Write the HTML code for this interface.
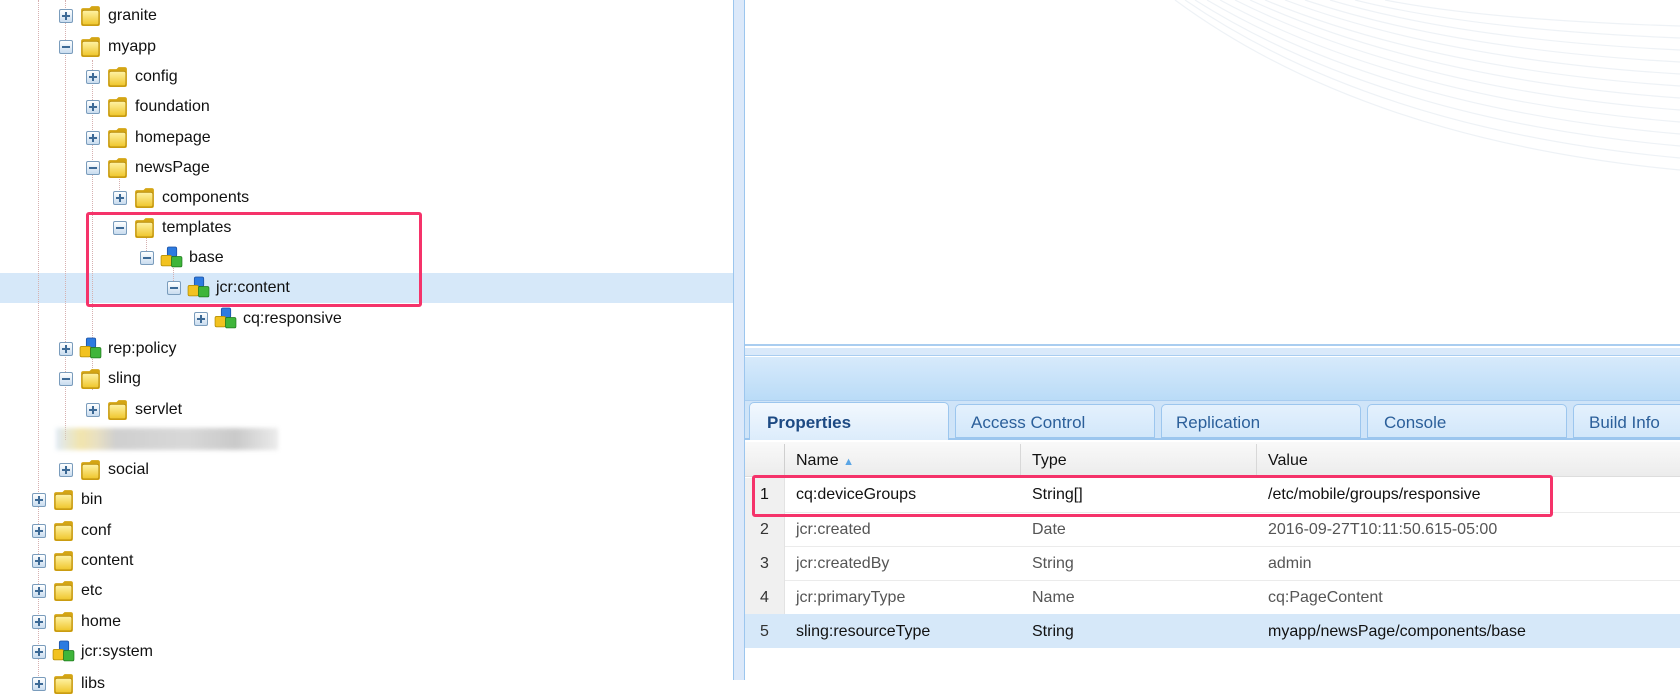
<!DOCTYPE html>
<html><head><meta charset="utf-8"><style>
*{margin:0;padding:0;box-sizing:border-box}
body{width:1680px;height:680px;overflow:hidden;background:#fff;font-family:"Liberation Sans",Arial,sans-serif;font-size:16px;color:#111;position:relative}
.r{position:absolute;height:30px;white-space:nowrap}
.e{position:absolute;top:8px;left:0;width:14px;height:14px;border:1px solid #7a9cbc;border-radius:2px;background:linear-gradient(#fff,#c9dcef)}
.e:before{content:"";position:absolute;left:2px;top:5px;width:8px;height:2px;background:#3d6a96}
.e.p:after{content:"";position:absolute;left:5px;top:2px;width:2px;height:8px;background:#3d6a96}
.f{position:absolute;left:20px;top:3px;width:23px;height:23px}
.t{position:absolute;left:49px;top:6px}
.dl{position:absolute;width:0;border-left:1px dotted #d6b0b0}
.hl{position:absolute;left:0;top:273px;width:733px;height:30px;background:#d6e8f9}
.cell{position:absolute;white-space:nowrap}
</style></head><body>
<svg width="0" height="0" style="position:absolute"><defs>
<linearGradient id="fg" x1="0" y1="0" x2="0" y2="1"><stop offset="0" stop-color="#fff3a6"/><stop offset="1" stop-color="#efc52a"/></linearGradient>
<symbol id="fo" viewBox="0 0 22 22"><path d="M2 6 L2 19 Q2 21 4 21 L18 21 Q20 21 20 19 L20 4 Q20 2 18 2 L12 2 L10 4 L4 4 Q2 4 2 6Z" fill="#d4a514"/><path d="M3 8 Q3 6 5 6 L17 6 Q19 6 19 8 L19 18 Q19 20 17 20 L5 20 Q3 20 3 18Z" fill="url(#fg)" stroke="#b98d0c" stroke-width=".8"/></symbol>
<symbol id="cu" viewBox="0 0 22 22"><rect x="7" y="1" width="9" height="9" rx="1.5" fill="#2d7be0" stroke="#1a4fa0" stroke-width=".7"/><rect x="1" y="9" width="10" height="10" rx="1.5" fill="#f2c21f" stroke="#b08a00" stroke-width=".7"/><rect x="11" y="10" width="10" height="10" rx="1.5" fill="#3fb53a" stroke="#1e7a1c" stroke-width=".7"/></symbol>
</defs></svg>

<div class="hl"></div>
<div class="dl" style="left:38px;top:0;height:680px"></div>
<div class="dl" style="left:65px;top:0;height:440px"></div>
<div class="dl" style="left:92px;top:60px;height:330px"></div>
<div class="dl" style="left:119px;top:170px;height:30px"></div>
<div class="dl" style="left:146px;top:225px;height:30px"></div>
<div class="dl" style="left:173px;top:255px;height:30px"></div>

<div class="r" style="top:1px;left:59px"><span class="e p"></span><svg class="f"><use href="#fo"/></svg><span class="t">granite</span></div>
<div class="r" style="top:32px;left:59px"><span class="e"></span><svg class="f"><use href="#fo"/></svg><span class="t">myapp</span></div>
<div class="r" style="top:62px;left:86px"><span class="e p"></span><svg class="f"><use href="#fo"/></svg><span class="t">config</span></div>
<div class="r" style="top:92px;left:86px"><span class="e p"></span><svg class="f"><use href="#fo"/></svg><span class="t">foundation</span></div>
<div class="r" style="top:123px;left:86px"><span class="e p"></span><svg class="f"><use href="#fo"/></svg><span class="t">homepage</span></div>
<div class="r" style="top:153px;left:86px"><span class="e"></span><svg class="f"><use href="#fo"/></svg><span class="t">newsPage</span></div>
<div class="r" style="top:183px;left:113px"><span class="e p"></span><svg class="f"><use href="#fo"/></svg><span class="t">components</span></div>
<div class="r" style="top:213px;left:113px"><span class="e"></span><svg class="f"><use href="#fo"/></svg><span class="t">templates</span></div>
<div class="r" style="top:243px;left:140px"><span class="e"></span><svg class="f"><use href="#cu"/></svg><span class="t">base</span></div>
<div class="r" style="top:273px;left:167px"><span class="e"></span><svg class="f"><use href="#cu"/></svg><span class="t">jcr:content</span></div>
<div class="r" style="top:304px;left:194px"><span class="e p"></span><svg class="f"><use href="#cu"/></svg><span class="t">cq:responsive</span></div>
<div class="r" style="top:334px;left:59px"><span class="e p"></span><svg class="f"><use href="#cu"/></svg><span class="t">rep:policy</span></div>
<div class="r" style="top:364px;left:59px"><span class="e"></span><svg class="f"><use href="#fo"/></svg><span class="t">sling</span></div>
<div class="r" style="top:395px;left:86px"><span class="e p"></span><svg class="f"><use href="#fo"/></svg><span class="t">servlet</span></div>
<div style="position:absolute;left:56px;top:428px;width:222px;height:22px;background:linear-gradient(90deg,#c6d9ec 0,#e7cf6a 25px,#d8c890 40px,#a9a9a9 60px,#b9b9b9 130px,#9f9f9f 180px,#dcdcdc 222px);opacity:.55;filter:blur(2px)"></div>
<div class="r" style="top:455px;left:59px"><span class="e p"></span><svg class="f"><use href="#fo"/></svg><span class="t">social</span></div>
<div class="r" style="top:485px;left:32px"><span class="e p"></span><svg class="f"><use href="#fo"/></svg><span class="t">bin</span></div>
<div class="r" style="top:516px;left:32px"><span class="e p"></span><svg class="f"><use href="#fo"/></svg><span class="t">conf</span></div>
<div class="r" style="top:546px;left:32px"><span class="e p"></span><svg class="f"><use href="#fo"/></svg><span class="t">content</span></div>
<div class="r" style="top:576px;left:32px"><span class="e p"></span><svg class="f"><use href="#fo"/></svg><span class="t">etc</span></div>
<div class="r" style="top:607px;left:32px"><span class="e p"></span><svg class="f"><use href="#fo"/></svg><span class="t">home</span></div>
<div class="r" style="top:637px;left:32px"><span class="e p"></span><svg class="f"><use href="#cu"/></svg><span class="t">jcr:system</span></div>
<div class="r" style="top:669px;left:32px"><span class="e p"></span><svg class="f"><use href="#fo"/></svg><span class="t">libs</span></div>

<div style="position:absolute;left:86px;top:212px;width:336px;height:95px;border:3px solid #f5336a;border-radius:3px"></div>

<div style="position:absolute;left:733px;top:0;width:12px;height:680px;background:#dce9fa;border-left:1px solid #9cc6ee;border-right:1px solid #9cc6ee"></div>

<div style="position:absolute;left:745px;top:0;width:935px;height:346px;background:#fff;border-bottom:2px solid #a9cdf0;overflow:hidden">
<svg width="935" height="346" style="position:absolute;left:0;top:0" fill="none" stroke="#eef2f6" stroke-width="1.2">
<path d="M430 0 Q620 140 935 170"/><path d="M440 0 Q630 130 935 158"/><path d="M450 0 Q640 120 935 146"/><path d="M462 0 Q650 110 935 134"/><path d="M475 0 Q660 100 935 122"/><path d="M490 0 Q670 90 935 110"/><path d="M505 0 Q680 80 935 98"/><path d="M520 0 Q690 70 935 86"/><path d="M540 0 Q700 60 935 74"/><path d="M560 0 Q710 50 935 62"/><path d="M585 0 Q720 40 935 50"/><path d="M610 0 Q730 30 935 38"/><path d="M640 0 Q740 20 935 26"/>
</svg></div>
<div style="position:absolute;left:745px;top:348px;width:935px;height:8px;background:#d9e9fa;border-bottom:1px solid #a9cdf0"></div>
<div style="position:absolute;left:745px;top:357px;width:935px;height:44px;background:linear-gradient(#d7eafb,#b9dbf7)"></div>
<div style="position:absolute;left:745px;top:400px;width:935px;height:40px;background:#cfe4f8;border-top:1px solid #a9cdf0;border-bottom:2px solid #9cc6ee"></div>
<div style="position:absolute;left:749px;top:402px;width:200px;height:38px;background:linear-gradient(#f2f8fe,#dcecfb);border:1px solid #9cc6ee;border-bottom:none;border-radius:5px 5px 0 0;font-weight:bold;color:#1d4a83;font-size:17px;padding:10px 0 0 17px">Properties</div>
<div style="position:absolute;left:955px;top:404px;width:200px;height:34px;background:linear-gradient(#e4f1fd,#d2e7fa);border:1px solid #9cc6ee;border-radius:5px 5px 0 0;color:#2b5f9a;font-size:17px;padding:8px 0 0 15px">Access Control</div>
<div style="position:absolute;left:1161px;top:404px;width:200px;height:34px;background:linear-gradient(#e4f1fd,#d2e7fa);border:1px solid #9cc6ee;border-radius:5px 5px 0 0;color:#2b5f9a;font-size:17px;padding:8px 0 0 14px">Replication</div>
<div style="position:absolute;left:1367px;top:404px;width:200px;height:34px;background:linear-gradient(#e4f1fd,#d2e7fa);border:1px solid #9cc6ee;border-radius:5px 5px 0 0;color:#2b5f9a;font-size:17px;padding:8px 0 0 16px">Console</div>
<div style="position:absolute;left:1573px;top:404px;width:120px;height:34px;background:linear-gradient(#e4f1fd,#d2e7fa);border:1px solid #9cc6ee;border-radius:5px 5px 0 0;color:#2b5f9a;font-size:17px;padding:8px 0 0 15px">Build Info</div>

<div style="position:absolute;left:745px;top:442px;width:935px;height:35px;background:linear-gradient(#f9f9f9,#ececec);border-bottom:1px solid #ddd"></div>
<div style="position:absolute;left:784px;top:444px;width:1px;height:33px;background:#cfcfcf"></div>
<div style="position:absolute;left:1020px;top:444px;width:1px;height:33px;background:#d8d8d8"></div>
<div style="position:absolute;left:1256px;top:444px;width:1px;height:33px;background:#d8d8d8"></div>
<div class="cell" style="left:796px;top:452px">Name <span style="color:#5aa5e5;font-size:11px">▲</span></div>
<div class="cell" style="left:1032px;top:452px">Type</div>
<div class="cell" style="left:1268px;top:452px">Value</div>

<div style="position:absolute;left:745px;top:478px;width:40px;height:170px;background:#f0f0f0;border-right:1px solid #e3e3e3"></div>
<div style="position:absolute;left:745px;top:614px;width:935px;height:34px;background:#d6e8f9"></div>
<div style="position:absolute;left:785px;top:512px;width:895px;height:1px;background:#ebebeb"></div>
<div style="position:absolute;left:785px;top:546px;width:895px;height:1px;background:#ebebeb"></div>
<div style="position:absolute;left:785px;top:580px;width:895px;height:1px;background:#ebebeb"></div>

<div class="cell" style="left:760px;top:486px">1</div><div class="cell" style="left:796px;top:486px">cq:deviceGroups</div><div class="cell" style="left:1032px;top:486px">String[]</div><div class="cell" style="left:1268px;top:486px">/etc/mobile/groups/responsive</div>
<div class="cell" style="left:760px;top:521px;color:#333">2</div><div class="cell" style="left:796px;top:521px;color:#555">jcr:created</div><div class="cell" style="left:1032px;top:521px;color:#555">Date</div><div class="cell" style="left:1268px;top:521px;color:#555">2016-09-27T10:11:50.615-05:00</div>
<div class="cell" style="left:760px;top:555px;color:#333">3</div><div class="cell" style="left:796px;top:555px;color:#555">jcr:createdBy</div><div class="cell" style="left:1032px;top:555px;color:#555">String</div><div class="cell" style="left:1268px;top:555px;color:#555">admin</div>
<div class="cell" style="left:760px;top:589px;color:#333">4</div><div class="cell" style="left:796px;top:589px;color:#555">jcr:primaryType</div><div class="cell" style="left:1032px;top:589px;color:#555">Name</div><div class="cell" style="left:1268px;top:589px;color:#555">cq:PageContent</div>
<div class="cell" style="left:760px;top:623px;color:#333">5</div><div class="cell" style="left:796px;top:623px">sling:resourceType</div><div class="cell" style="left:1032px;top:623px">String</div><div class="cell" style="left:1268px;top:623px">myapp/newsPage/components/base</div>

<div style="position:absolute;left:752px;top:475px;width:801px;height:42px;border:3px solid #f5336a;border-radius:3px"></div>
</body></html>
